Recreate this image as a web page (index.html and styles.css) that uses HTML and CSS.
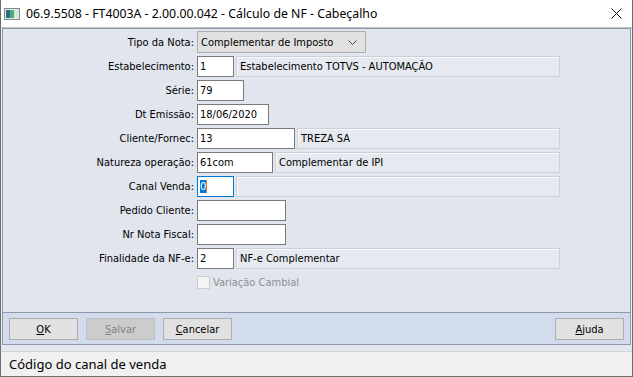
FILE: index.html
```html
<!DOCTYPE html>
<html lang="pt-BR">
<head>
<meta charset="utf-8">
<title>Cálculo de NF - Cabeçalho</title>
<link rel="stylesheet" href="styles.css">
</head>
<body>
<div class="window">
  <div class="titlebar">
    <svg class="app-icon" width="16" height="12" viewBox="0 0 16 12">
      <rect x="0.5" y="0.5" width="15" height="11" fill="#e4ecec" stroke="#7d8a8a"/>
      <rect x="2" y="2" width="4" height="8" fill="#2f6f86"/>
      <rect x="6" y="2" width="4" height="8" fill="#4fae73"/>
      <rect x="10" y="2" width="4" height="8" fill="#d4e8de"/>
    </svg>
    <span class="title-text">06.9.5508 - FT4003A - 2.00.00.042 - Cálculo de NF - Cabeçalho</span>
    <svg class="close-icon" width="11" height="11" viewBox="0 0 11 11">
      <path d="M0.5 0.5 L10.5 10.5 M10.5 0.5 L0.5 10.5" stroke="#111" stroke-width="1" fill="none"/>
    </svg>
  </div>
  <div class="panel">
    <div class="form">
      <label class="lbl">Tipo da Nota:</label>
      <div class="row">
        <div class="select"><span>Complementar de Imposto</span>
          <svg class="chev" width="9" height="5" viewBox="0 0 9 5"><path d="M0.5 0.5 L4.5 4.5 L8.5 0.5" stroke="#444" fill="none"/></svg>
        </div>
      </div>

      <label class="lbl">Estabelecimento:</label>
      <div class="row line">
        <div class="inp w37">1</div>
        <div class="ro">Estabelecimento TOTVS - AUTOMAÇÃO</div>
      </div>

      <label class="lbl">Série:</label>
      <div class="row"><div class="inp w47">79</div></div>

      <label class="lbl">Dt Emissão:</label>
      <div class="row"><div class="inp w72">18/06/2020</div></div>

      <label class="lbl">Cliente/Fornec:</label>
      <div class="row line">
        <div class="inp w98">13</div>
        <div class="ro">TREZA SA</div>
      </div>

      <label class="lbl">Natureza operação:</label>
      <div class="row line">
        <div class="inp w76">61com</div>
        <div class="ro">Complementar de IPI</div>
      </div>

      <label class="lbl">Canal Venda:</label>
      <div class="row line">
        <div class="inp w37 focus"><span class="sel">0</span></div>
        <div class="ro"></div>
      </div>

      <label class="lbl">Pedido Cliente:</label>
      <div class="row"><div class="inp w89"></div></div>

      <label class="lbl">Nr Nota Fiscal:</label>
      <div class="row"><div class="inp w89"></div></div>

      <label class="lbl">Finalidade da NF-e:</label>
      <div class="row line">
        <div class="inp w37">2</div>
        <div class="ro">NF-e Complementar</div>
      </div>

      <span class="lbl"></span>
      <div class="row check-row">
        <span class="checkbox"></span>
        <span class="check-label">Variação Cambial</span>
      </div>
    </div>
    <div class="buttonbar">
      <button class="btn"><u>O</u>K</button>
      <button class="btn disabled"><u>S</u>alvar</button>
      <button class="btn"><u>C</u>ancelar</button>
      <span class="spacer"></span>
      <button class="btn"><u>A</u>juda</button>
    </div>
  </div>
  <div class="strip"></div>
  <div class="status">Código do canal de venda</div>
</div>
</body>
</html>
```
FILE: styles.css
```css
* { box-sizing: border-box; }
html, body { margin: 0; padding: 0; }
body { width: 633px; height: 377px; overflow: hidden; background: #ffffff; }

.window {
  width: 633px;
  height: 377px;
  border-left: 1px solid #6e6e6e;
  border-right: 1px solid #6e6e6e;
  border-bottom: 1px solid #6e6e6e;
  display: flex;
  flex-direction: column;
  background: #f0f0f0;
}

.titlebar {
  height: 28px;
  flex: none;
  background: #ffffff;
  border-bottom: 1px solid #c4c4c4;
  display: flex;
  align-items: center;
  padding-left: 3px;
  font-family: "Noto Sans", "Open Sans", sans-serif;
  font-size: 12.3px;
  color: #000;
  position: relative;
}
.app-icon { flex: none; margin-right: 6px; margin-top: 1px; }
.title-text { white-space: nowrap; }
.close-icon { position: absolute; left: 610px; top: 8px; }

.panel {
  margin: 0 1px;
  flex: none;
  height: 317px;
  border: 1px solid #8e98aa;
  display: flex;
  flex-direction: column;
  font-family: "DejaVu Sans Condensed", "DejaVu Sans", sans-serif;
  font-stretch: condensed;
  font-size: 11px;
  color: #000;
}

.form {
  flex: none;
  height: 281px;
  background: #e1e5ee;
  border-bottom: 1px solid #8e98aa;
  display: grid;
  grid-template-columns: 191px 363px;
  column-gap: 3px;
  row-gap: 3px;
  align-content: start;
  padding-top: 2px;
  box-sizing: content-box;
}

.lbl {
  text-align: right;
  align-self: center;
  white-space: nowrap;
}

.row { display: flex; gap: 2px; height: 21px; }
.row:first-of-type { height: 22px; }

.select {
  width: 169px;
  height: 22px;
  background: #e1e1e1;
  border: 1px solid #adadad;
  display: flex;
  align-items: center;
  justify-content: space-between;
  padding: 0 8px 0 3px;
}
.chev { flex: none; }

.inp {
  height: 21px;
  background: #ffffff;
  border: 1px solid #7a7a7a;
  padding: 0 2px;
  display: flex;
  align-items: center;
  white-space: nowrap;
  flex: none;
}
.inp.focus { border-color: #0078d7; }
.sel { background: #0078d7; color: #fff; border-right: 1px solid #e07a2c; line-height: 13px; }
.w37 { width: 37px; }
.w47 { width: 47px; }
.w72 { width: 72px; }
.w76 { width: 76px; }
.w89 { width: 89px; }
.w98 { width: 98px; }

.ro {
  flex: 1;
  height: 21px;
  background: #e6e9f0;
  border: 1px solid #ccd0d8;
  box-shadow: inset 1px 1px 0 #f7f8fa;
  padding: 0 3px;
  display: flex;
  align-items: center;
  white-space: nowrap;
}

.check-row { align-items: center; gap: 3px; margin-top: 3px; height: 15px; }
.checkbox {
  width: 13px;
  height: 13px;
  border: 1px solid #cccccc;
  background: #f4f4f4;
  flex: none;
}
.check-label { color: #8f8f8f; }

.buttonbar {
  flex: 1;
  background: #d3dcec;
  display: flex;
  align-items: flex-start;
  gap: 8px;
  padding: 5px 6px 0 6px;
}
.spacer { flex: 1; }
.btn {
  width: 69px;
  height: 22px;
  background: #e1e1e1;
  border: 1px solid #adadad;
  font: inherit;
  font-stretch: condensed;
  color: #000;
  padding: 0;
  margin: 0;
}
.btn.disabled { background: #cccccc; border-color: #bfbfbf; color: #838383; }

.strip {
  flex: none;
  height: 7px;
  margin: 0;
  background: #e4e7ee;
  border-bottom: 1px solid #d2d2d2;
}

.status {
  flex: 1;
  background: #f0f0f0;
  padding-left: 8px;
  padding-bottom: 1px;
  display: flex;
  align-items: center;
  font-family: "Noto Sans", "Open Sans", sans-serif;
  font-size: 13px;
  color: #000;
}
```
